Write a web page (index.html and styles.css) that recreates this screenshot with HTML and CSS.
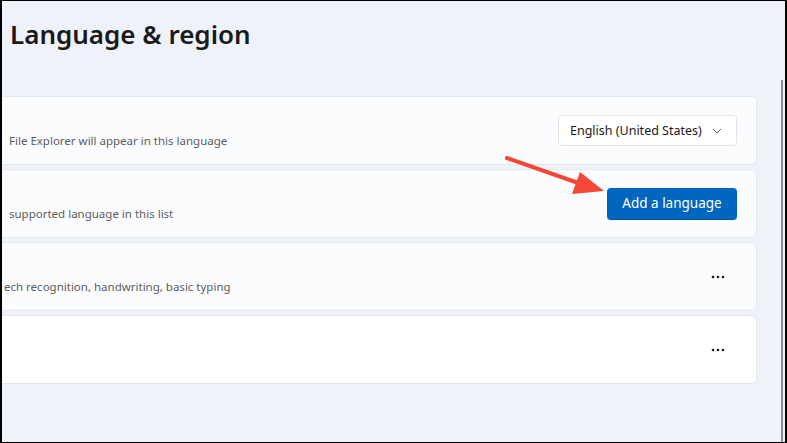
FILE: index.html
```html
<!DOCTYPE html>
<html lang="en">
<head>
    <meta charset="UTF-8">
    <title>Settings - Language &amp; region</title>
    <link rel="stylesheet" href="styles.css">
</head>
<body>
    <div class="window">
        <h1 class="page-title">Language &amp; region</h1>

        <div class="settings-list">
            <div class="setting-card">
                <div class="setting-info">
                    <div class="setting-desc">File Explorer will appear in this language</div>
                </div>
                <div class="dropdown">
                    <span>English (United States)</span>
                    <svg class="chevron" width="10" height="6" viewBox="0 0 10 6"><path d="M1 1l4 4 4-4" fill="none" stroke="#5f5f5f" stroke-width="1"/></svg>
                </div>
            </div>
            <div class="setting-card">
                <div class="setting-info">
                    <div class="setting-desc">supported language in this list</div>
                </div>
                <button class="primary-btn">Add a language</button>
            </div>
            <div class="setting-card">
                <div class="setting-info">
                    <div class="setting-desc flush">ech recognition, handwriting, basic typing</div>
                </div>
                <button class="more-btn" aria-label="More options">
                    <svg width="14" height="4" viewBox="0 0 14 4"><circle cx="2" cy="2" r="1.3"/><circle cx="7" cy="2" r="1.3"/><circle cx="12" cy="2" r="1.3"/></svg>
                </button>
            </div>
            <div class="setting-card last">
                <div class="setting-info"></div>
                <button class="more-btn" aria-label="More options">
                    <svg width="14" height="4" viewBox="0 0 14 4"><circle cx="2" cy="2" r="1.3"/><circle cx="7" cy="2" r="1.3"/><circle cx="12" cy="2" r="1.3"/></svg>
                </button>
            </div>
        </div>

        <div class="scrollbar"></div>

        <svg class="callout-arrow" width="110" height="45" viewBox="0 0 110 45">
            <line x1="3" y1="3" x2="80" y2="30" stroke="#f4473a" stroke-width="4" stroke-linecap="round"/>
            <polygon points="100,36 68,39 76,17" fill="#f4473a"/>
        </svg>
    </div>
</body>
</html>
```

FILE: styles.css
```css
body {
    margin: 0;
    font-family: "Noto Sans", "Open Sans", sans-serif;
    background: #000;
    overflow: hidden;
}
.window {
    position: relative;
    box-sizing: border-box;
    width: 787px;
    height: 443px;
    border-left: 2px solid #000;
    border-right: 2px solid #000;
    border-top: 1px solid #000;
    border-bottom: 1px solid #000;
    background: #eff3f9;
    overflow: hidden;
}
.page-title {
    margin: 0;
    padding: 14px 0 0 8px;
    height: 95px;
    box-sizing: border-box;
    font-size: 26px;
    font-weight: 600;
    color: #1a1a1a;
    line-height: 38px;
}
.settings-list {
    display: flex;
    flex-direction: column;
    gap: 4px;
    margin-left: -7px;
    margin-right: 28px;
}
.setting-card {
    display: flex;
    align-items: center;
    height: 69px;
    box-sizing: border-box;
    padding-right: 19px;
    background: #fbfcfe;
    border: 1px solid #e4e7eb;
    border-radius: 5px;
}
.setting-card.last {
    background: #fff;
}
.setting-info {
    flex: 1;
    padding-top: 20px;
}
.setting-desc {
    padding-left: 13px;
    font-size: 11.5px;
    color: #5d5d5d;
}
.setting-desc.flush {
    padding-left: 8px;
}
.dropdown {
    display: flex;
    align-items: center;
    justify-content: space-between;
    width: 179px;
    height: 31px;
    box-sizing: border-box;
    padding: 0 14px 0 11px;
    background: #fff;
    border: 1px solid #e3e5e8;
    border-radius: 4px;
    font-size: 12.5px;
    color: #1b1b1b;
}
.chevron {
    margin-top: 1px;
}
.primary-btn {
    width: 130px;
    height: 32px;
    border: none;
    border-bottom: 1px solid #00509c;
    border-radius: 4px;
    background: #0067c0;
    color: #fff;
    font-family: inherit;
    font-size: 13.5px;
    cursor: pointer;
}
.more-btn {
    display: flex;
    align-items: center;
    justify-content: center;
    width: 32px;
    height: 32px;
    margin-right: 3px;
    padding: 0;
    border: none;
    background: transparent;
    fill: #1a1a1a;
}
.scrollbar {
    position: absolute;
    top: 79px;
    bottom: 0;
    right: 2px;
    width: 2px;
    background: #8b8d90;
}
.callout-arrow {
    position: absolute;
    left: 502px;
    top: 154px;
}
```
